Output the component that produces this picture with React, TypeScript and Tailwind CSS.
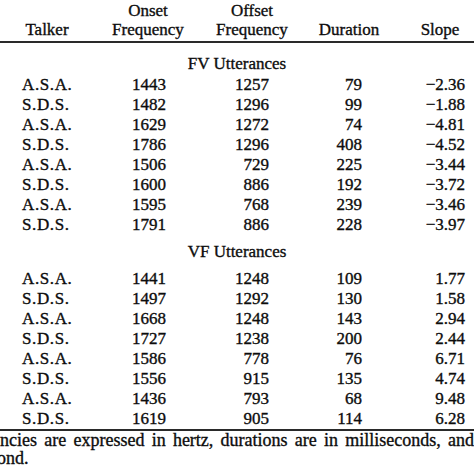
const fv = [
  ['A.S.A.', '1443', '1257', '79', '\u22122.36'],
  ['S.D.S.', '1482', '1296', '99', '\u22121.88'],
  ['A.S.A.', '1629', '1272', '74', '\u22124.81'],
  ['S.D.S.', '1786', '1296', '408', '\u22124.52'],
  ['A.S.A.', '1506', '729', '225', '\u22123.44'],
  ['S.D.S.', '1600', '886', '192', '\u22123.72'],
  ['A.S.A.', '1595', '768', '239', '\u22123.46'],
  ['S.D.S.', '1791', '886', '228', '\u22123.97'],
];

const vf = [
  ['A.S.A.', '1441', '1248', '109', '1.77'],
  ['S.D.S.', '1497', '1292', '130', '1.58'],
  ['A.S.A.', '1668', '1248', '143', '2.94'],
  ['S.D.S.', '1727', '1238', '200', '2.44'],
  ['A.S.A.', '1586', '778', '76', '6.71'],
  ['S.D.S.', '1556', '915', '135', '4.74'],
  ['A.S.A.', '1436', '793', '68', '9.48'],
  ['S.D.S.', '1619', '905', '114', '6.28'],
];

function Rows({ rows }: { rows: string[][] }) {
  return (
    <div>
      {rows.map((r, i) => (
        <div key={i} className="grid grid-cols-[110px_56px_103px_93px_103px] h-[20px] leading-[20px]">
          <div className="pl-[22px] tracking-[0.6px]">{r[0]}</div>
          <div className="text-right">{r[1]}</div>
          <div className="text-right">{r[2]}</div>
          <div className="text-right">{r[3]}</div>
          <div className="text-right">{r[4]}</div>
        </div>
      ))}
    </div>
  );
}

export default function App() {
  return (
    <div className="w-[474px] h-[474px] overflow-hidden bg-white text-[#0d0d0d] text-[17px] font-['Liberation_Serif',serif] [-webkit-text-stroke:0.35px_#0d0d0d]">
      {/* header */}
      <div className="grid grid-cols-[94px_108px_100px_94px_78px] pt-[1px] leading-[19px]">
        <div className="flex flex-col justify-end text-center">Talker</div>
        <div className="text-center">
          <div>Onset</div>
          <div>Frequency</div>
        </div>
        <div className="text-center">
          <div>Offset</div>
          <div>Frequency</div>
        </div>
        <div className="flex flex-col justify-end text-center">Duration</div>
        <div className="flex flex-col justify-end text-center pl-[10px]">Slope</div>
      </div>
      <div className="mt-[2px] h-[2px] bg-[#2a2a2a]" />

      <div className="mt-[11px] h-[20px] leading-[20px] text-center">FV Utterances</div>
      <div className="mt-[1px]">
        <Rows rows={fv} />
      </div>

      <div className="mt-[7px] h-[20px] leading-[20px] text-center">VF Utterances</div>
      <div className="mt-[7px]">
        <Rows rows={vf} />
      </div>
      <div className="h-[2px] bg-[#2a2a2a]" />

      {/* footnote, cut at the left edge */}
      <div className="text-[18px] leading-[18px]">
        <div className="text-justify [text-align-last:justify]">
          ncies are expressed in hertz, durations are in milliseconds, and
        </div>
        <div className="-ml-[3px]">ond.</div>
      </div>
    </div>
  );
}
